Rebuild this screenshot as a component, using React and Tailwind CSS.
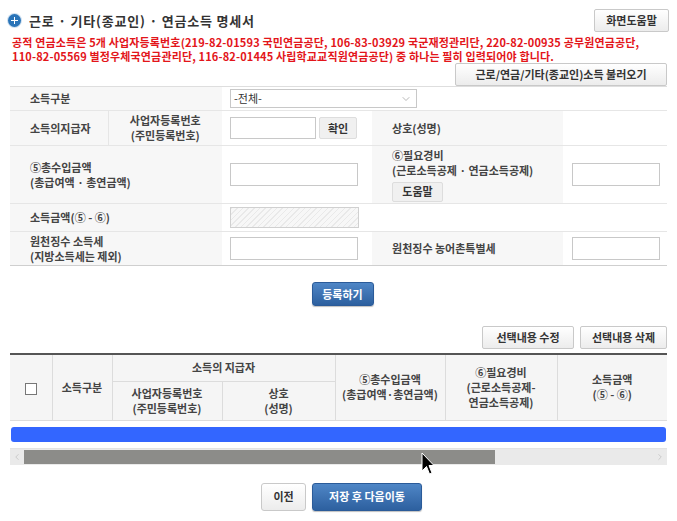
import { ChevronDown, ChevronLeft, ChevronRight } from 'lucide-react'

const font = 'font-["Noto_Sans_CJK_KR","Noto_Sans",sans-serif]'

function GrayButton({ children, className = '' }) {
  return (
    <button
      className={`border border-[#c9c9c9] rounded-[2px] bg-gradient-to-b from-white to-[#ececec] text-[11px] font-bold text-[#333] leading-none ${className}`}
    >
      {children}
    </button>
  )
}

function BlueButton({ children, className = '' }) {
  return (
    <button
      className={`border border-[#2b5b99] rounded-[3px] bg-gradient-to-b from-[#4f86c6] to-[#2d609f] text-[11px] font-bold text-white leading-none shadow-[0_1px_1px_rgba(0,0,0,0.25)] ${className}`}
    >
      {children}
    </button>
  )
}

function Input({ className = '' }) {
  return <div className={`border border-[#c8c8c8] bg-white ${className}`} />
}

function Label({ children, className = '', ...rest }) {
  return (
    <td
      {...rest}
      className={`bg-[#f7f7f7] border-b border-[#e6e6e6] text-[11px] font-bold text-[#444] leading-[15px] ${className}`}
    >
      {children}
    </td>
  )
}

function Cell({ children, className = '', ...rest }) {
  return (
    <td {...rest} className={`border-b border-[#e6e6e6] bg-white ${className}`}>
      {children}
    </td>
  )
}

function Th({ children, className = '', ...rest }) {
  return (
    <th
      {...rest}
      className={`bg-[#f5f5f5] border-b border-r border-[#dcdcdc] text-[11px] font-bold text-[#444] leading-[15px] ${className}`}
    >
      {children}
    </th>
  )
}

export default function App() {
  return (
    <div className={`relative w-[677px] h-[521px] bg-white overflow-hidden ${font}`}>
      {/* header */}
      <div className="flex items-center justify-between pl-[8px] pr-[8px] pt-[9px]">
        <div className="flex items-center gap-[8px]">
          <span className="relative w-[13px] h-[13px] rounded-full bg-[#2a74b8] shadow-[0_0_0_1px_#cfe0f0]">
            <span className="absolute left-[3px] top-[6px] w-[7px] h-[1px] bg-white" />
            <span className="absolute left-[6px] top-[3px] w-[1px] h-[7px] bg-white" />
          </span>
          <h1 className="text-[13px] font-bold text-[#333] tracking-[0.8px]">
            근로 · 기타(종교인) · 연금소득 명세서
          </h1>
        </div>
        <GrayButton className="w-[75px] h-[23px]">화면도움말</GrayButton>
      </div>

      <div className="px-[10px]">
        <p className="mt-[3px] pl-[2px] text-[11px] font-bold text-[#e3151a] leading-[14px] tracking-[0.15px] whitespace-nowrap">
          공적 연금소득은 5개 사업자등록번호(219-82-01593 국민연금공단, 106-83-03929 국군재정관리단, 220-82-00935 공무원연금공단,
          <br />
          110-82-05569 별정우체국연금관리단, 116-82-01445 사립학교교직원연금공단) 중 하나는 필히 입력되어야 합니다.
        </p>

        <div className="flex justify-end">
          <GrayButton className="w-[212px] h-[23px]">근로/연금/기타(종교인)소득 불러오기</GrayButton>
        </div>

        {/* form table */}
        <table className="w-full border-collapse border-t border-[#dedede] table-fixed">
          <colgroup>
            <col className="w-[98px]" />
            <col className="w-[114px]" />
            <col className="w-[150px]" />
            <col className="w-[191px]" />
            <col />
          </colgroup>
          <tbody>
            <tr className="h-[24px]">
              <Label colSpan={2} className="pl-[20px]">소득구분</Label>
              <Cell colSpan={3} className="pl-[8px]">
                <div className="w-[187px] h-[19px] border border-[#c8c8c8] flex items-center justify-between pl-[3px] pr-[4px] text-[11px] text-[#333]">
                  <span>-전체-</span>
                  <ChevronDown size={12} strokeWidth={1.2} className="text-[#888]" />
                </div>
              </Cell>
            </tr>
            <tr className="h-[35px]">
              <Label className="pl-[20px] border-r border-r-[#e6e6e6]">소득의지급자</Label>
              <Label className="text-center">
                사업자등록번호
                <br />
                (주민등록번호)
              </Label>
              <Cell className="pl-[8px]">
                <div className="flex items-center gap-[3px]">
                  <Input className="w-[86px] h-[22px]" />
                  <GrayButton className="w-[38px] h-[22px] border-[#ddd] bg-none bg-[#f0f0f0]">확인</GrayButton>
                </div>
              </Cell>
              <Label className="pl-[20px]">상호(성명)</Label>
              <Cell />
            </tr>
            <tr className="h-[58px]">
              <Label colSpan={2} className="pl-[20px]">
                ⑤총수입금액
                <br />
                (총급여액 · 총연금액)
              </Label>
              <Cell className="pl-[8px]">
                <Input className="w-[128px] h-[23px]" />
              </Cell>
              <Label className="pl-[20px]">
                ⑥필요경비
                <br />
                (근로소득공제 · 연금소득공제)
                <div className="mt-[4px]">
                  <GrayButton className="w-[51px] h-[20px] border-[#ddd] bg-none bg-[#f0f0f0]">도움말</GrayButton>
                </div>
              </Label>
              <Cell className="pl-[9px]">
                <Input className="w-[88px] h-[23px]" />
              </Cell>
            </tr>
            <tr className="h-[28px]">
              <Label colSpan={2} className="pl-[20px]">소득금액(⑤ - ⑥)</Label>
              <Cell colSpan={3} className="pl-[8px]">
                <div className="w-[129px] h-[21px] border border-[#d0d0d0] bg-[repeating-linear-gradient(135deg,#e9e9e9_0,#e9e9e9_1px,#f7f7f7_1px,#f7f7f7_4px)]" />
              </Cell>
            </tr>
            <tr className="h-[34px]">
              <Label colSpan={2} className="pl-[20px] border-b-[#cfcfcf]">
                원천징수 소득세
                <br />
                (지방소득세는 제외)
              </Label>
              <Cell className="pl-[8px] border-b-[#cfcfcf]">
                <Input className="w-[128px] h-[23px]" />
              </Cell>
              <Label className="pl-[20px] border-b-[#cfcfcf]">원천징수 농어촌특별세</Label>
              <Cell className="pl-[9px] border-b-[#cfcfcf]">
                <Input className="w-[88px] h-[23px]" />
              </Cell>
            </tr>
          </tbody>
        </table>

        <div className="flex justify-center pl-[8px] mt-[16px]">
          <BlueButton className="w-[62px] h-[24px]">등록하기</BlueButton>
        </div>

        <div className="flex justify-end gap-[6px] mt-[20px]">
          <GrayButton className="w-[92px] h-[23px]">선택내용 수정</GrayButton>
          <GrayButton className="w-[87px] h-[23px]">선택내용 삭제</GrayButton>
        </div>

        {/* list table */}
        <div className="mt-[4px] border-t-2 border-[#555]">
          <table className="w-full border-collapse table-fixed">
            <colgroup>
              <col className="w-[42px]" />
              <col className="w-[60px]" />
              <col className="w-[110px]" />
              <col className="w-[113px]" />
              <col className="w-[110px]" />
              <col className="w-[112px]" />
              <col />
            </colgroup>
            <thead>
              <tr className="h-[26px]">
                <Th rowSpan={2}>
                  <span className="inline-block w-[12px] h-[12px] border border-[#777] bg-white align-middle" />
                </Th>
                <Th rowSpan={2}>소득구분</Th>
                <Th colSpan={2}>소득의 지급자</Th>
                <Th rowSpan={2}>
                  ⑤총수입금액
                  <br />
                  (총급여액·총연금액)
                </Th>
                <Th rowSpan={2}>
                  ⑥필요경비
                  <br />
                  (근로소득공제-
                  <br />
                  연금소득공제)
                </Th>
                <Th rowSpan={2} className="border-r-0">
                  소득금액
                  <br />
                  (⑤ - ⑥)
                </Th>
              </tr>
              <tr className="h-[39px]">
                <Th>
                  사업자등록번호
                  <br />
                  (주민등록번호)
                </Th>
                <Th>
                  상호
                  <br />
                  (성명)
                </Th>
              </tr>
            </thead>
            <tbody>
              <tr className="h-[28px]">
                <td colSpan={7} className="p-0 px-[1px] border-b border-[#e3e3e3]">
                  <div className="h-[15px] rounded-[3px] bg-[#3366ff]" />
                </td>
              </tr>
            </tbody>
          </table>

          {/* horizontal scrollbar */}
          <div className="h-[16px] bg-[#eaeaea] flex items-center">
            <ChevronLeft size={10} strokeWidth={1.2} className="text-[#aaa] w-[14px]" />
            <div className="h-[14px] w-[471px] bg-[#8c8c89]" />
            <div className="flex-1" />
            <ChevronRight size={10} strokeWidth={1.2} className="text-[#aaa] w-[14px]" />
          </div>
        </div>

        <div className="flex justify-center gap-[6px] mt-[18px] pl-[6px]">
          <GrayButton className="w-[45px] h-[28px] rounded-[3px]">이전</GrayButton>
          <BlueButton className="w-[110px] h-[28px]">저장 후 다음이동</BlueButton>
        </div>
      </div>

      {/* mouse cursor */}
      <svg
        className="absolute left-[421px] top-[452px]"
        width="14"
        height="24"
        viewBox="0 0 14 24"
      >
        <path
          d="M1 1 L1 19 L5.5 14.5 L8.5 22 L11 21 L8 13.5 L13 13.5 Z"
          fill="#000"
          stroke="#fff"
          strokeWidth="1"
          strokeLinejoin="round"
        />
      </svg>
    </div>
  )
}
